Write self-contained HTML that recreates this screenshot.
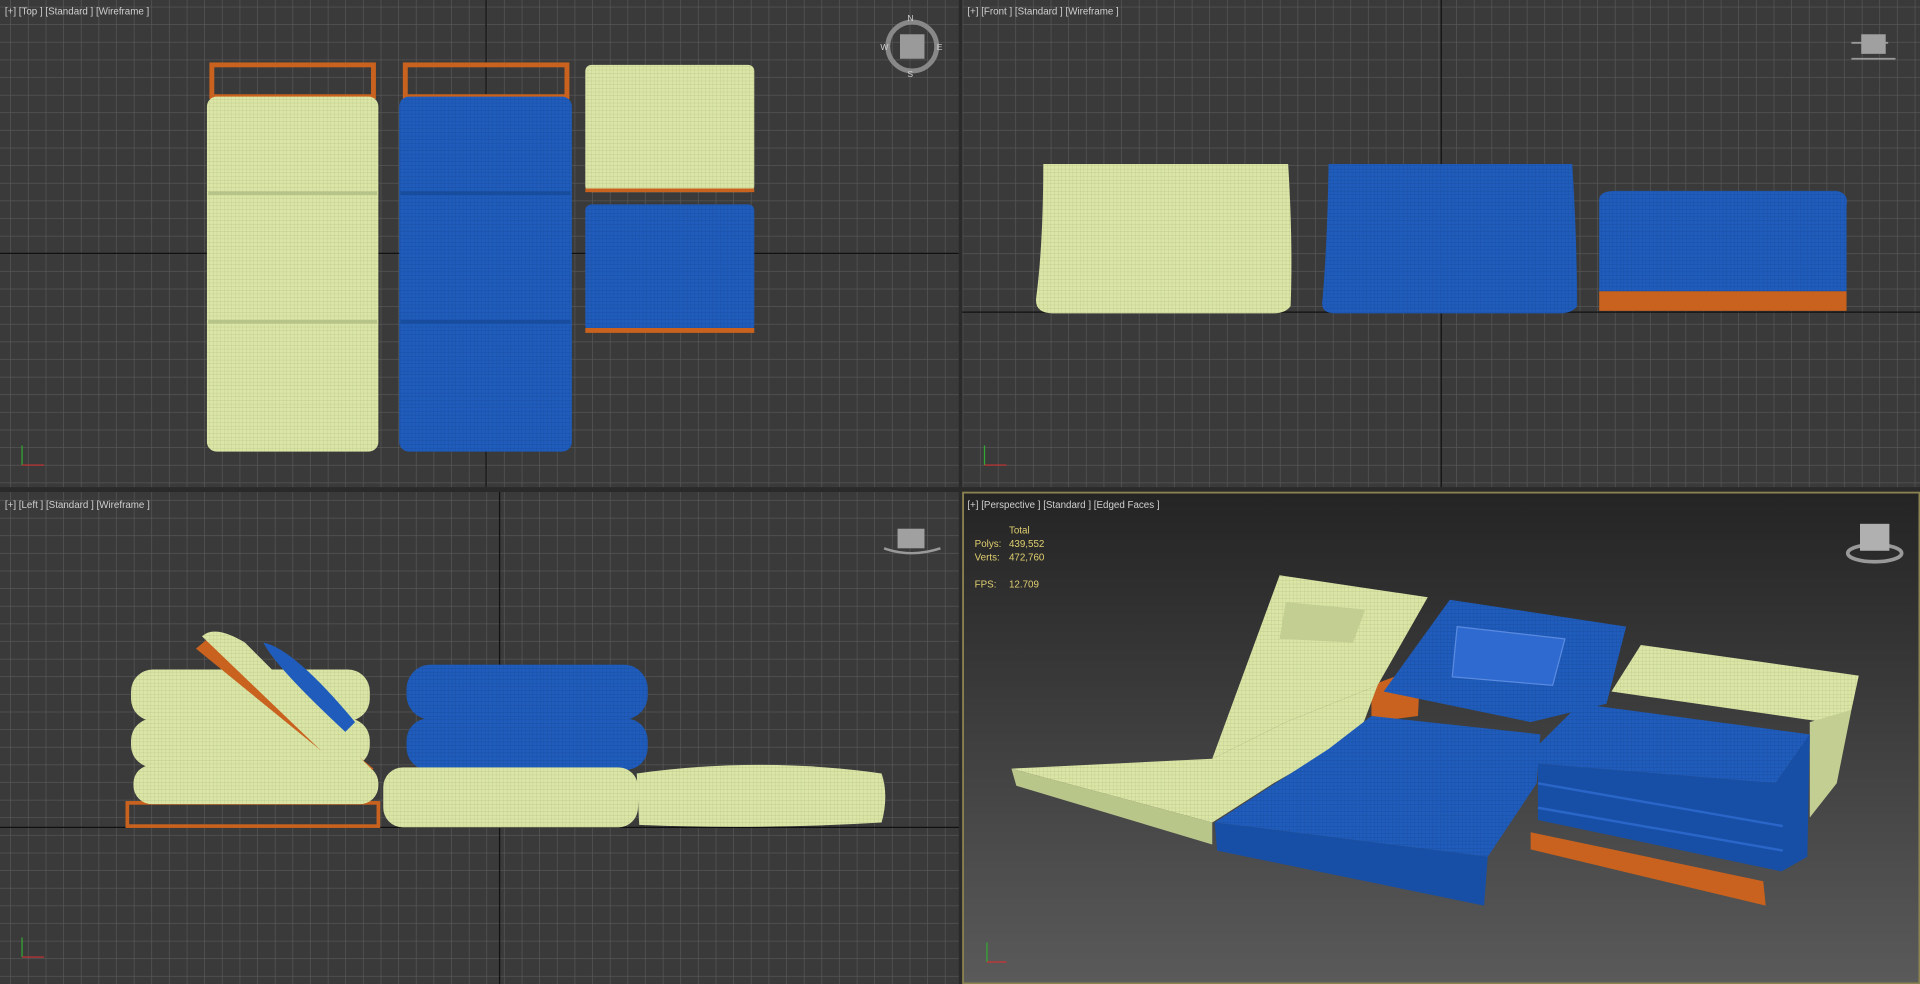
<!DOCTYPE html>
<html><head><meta charset="utf-8"><style>
html,body{margin:0;padding:0;background:#3a3a3a;overflow:hidden}
svg{display:block}
text{font-family:"Liberation Sans",sans-serif;font-size:8px;fill:#d0d0d0}
</style></head><body>
<svg width="1920" height="984" viewBox="0 0 1568 804" preserveAspectRatio="none">
<defs>
<pattern id="g1" x="9" y="6" width="14.4" height="14.4" patternUnits="userSpaceOnUse"><path d="M14.4 0V14.4M0 14.4H14.4" stroke="#5a5a5a" stroke-width="1" fill="none"/></pattern>
<pattern id="mc" width="3" height="3" patternUnits="userSpaceOnUse"><rect width="3" height="3" fill="#dbe6a6"/><path d="M0 0H3M0 0V3" stroke="#b7c489" stroke-width=".5"/></pattern>
<pattern id="mb" width="3" height="3" patternUnits="userSpaceOnUse"><rect width="3" height="3" fill="#1f5cbc"/><path d="M0 0H3M0 0V3" stroke="#184c9c" stroke-width=".5"/></pattern>
<linearGradient id="pg" x1="0" y1="0" x2="0" y2="1"><stop offset="0" stop-color="#242424"/><stop offset="1" stop-color="#5a5a5a"/></linearGradient>
</defs>
<rect width="1568" height="804" fill="#2a2a2a"/>
<rect x="0" y="0" width="783" height="398" fill="#3a3a3a"/><rect x="0" y="0" width="783" height="398" fill="url(#g1)"/>
<path d="M0 207H783M397 0V398" stroke="#111" stroke-width="1"/>
<rect x="786" y="0" width="782" height="398" fill="#3a3a3a"/><rect x="786" y="0" width="782" height="398" fill="url(#g1)"/>
<path d="M786 255H1568M1177 0V398" stroke="#111"/>
<rect x="0" y="402" width="783" height="402" fill="#3a3a3a"/><rect x="0" y="402" width="783" height="402" fill="url(#g1)"/>
<path d="M0 676H783M408 402V804" stroke="#111"/>
<rect x="786.5" y="402.5" width="781" height="401" fill="url(#pg)" stroke="#8a8250" stroke-width="1.5"/>

<text x="4" y="12">[+] [Top ] [Standard ] [Wireframe ]</text>
<text x="790" y="12">[+] [Front ] [Standard ] [Wireframe ]</text>
<text x="4" y="415">[+] [Left ] [Standard ] [Wireframe ]</text>
<text x="790" y="415">[+] [Perspective ] [Standard ] [Edged Faces ]</text>
<text x="824" y="436" style="fill:#e0d070">Total</text>
<text x="796" y="447" style="fill:#e0d070">Polys:</text><text x="824" y="447" style="fill:#e0d070">439,552</text>
<text x="796" y="458" style="fill:#e0d070">Verts:</text><text x="824" y="458" style="fill:#e0d070">472,760</text>
<text x="796" y="480" style="fill:#e0d070">FPS:</text><text x="824" y="480" style="fill:#e0d070">12.709</text>

<rect x="173" y="53" width="132" height="26" fill="none" stroke="#c8621e" stroke-width="4"/>
<rect x="331" y="53" width="132" height="26" fill="none" stroke="#c8621e" stroke-width="4"/>
<rect x="169" y="79" width="140" height="290" rx="8" fill="url(#mc)"/>
<path d="M170 158H308M170 263H308" stroke="#b7c489" stroke-width="3"/>
<rect x="326" y="79" width="141" height="290" rx="8" fill="url(#mb)"/>
<path d="M327 158H466M327 263H466" stroke="#184c9c" stroke-width="3"/>
<rect x="478" y="53" width="138" height="104" rx="5" fill="url(#mc)"/>
<rect x="478" y="154" width="138" height="3" fill="#c8621e"/>
<rect x="478" y="167" width="138" height="104" rx="5" fill="url(#mb)"/>
<rect x="478" y="268" width="138" height="4" fill="#c8621e"/>
<circle cx="745" cy="38" r="20" fill="none" stroke="#888" stroke-width="4"/>
<rect x="735" y="28" width="20" height="20" fill="#9a9a9a"/>
<text x="741" y="17" style="font-size:7px">N</text><text x="741" y="63" style="font-size:7px">S</text>
<text x="719" y="41" style="font-size:7px">W</text><text x="765" y="41" style="font-size:7px">E</text>
<path d="M1512 35H1542M1512 48H1548" stroke="#999" stroke-width="1.5"/><rect x="1520" y="28" width="20" height="16" fill="#a0a0a0"/>
<path d="M722 448q22 8 46 0" stroke="#999" stroke-width="2" fill="none"/><rect x="733" y="432" width="22" height="16" fill="#a0a0a0"/>
<ellipse cx="1531" cy="452" rx="22" ry="7" fill="none" stroke="#999" stroke-width="3"/><rect x="1519" y="428" width="24" height="22" fill="#b0b0b0"/>

<path d="M852 134H1052Q1056 200 1054 250Q1050 256 1040 256H860Q846 256 846 245Q852 200 852 134Z" fill="url(#mc)"/>
<path d="M1085 134H1284Q1288 200 1288 250Q1284 256 1274 256H1090Q1078 256 1080 245Q1084 200 1085 134Z" fill="url(#mb)"/>
<path d="M1306 163Q1306 156 1320 156H1500Q1510 158 1508 168V238H1306Z" fill="url(#mb)"/>
<rect x="1306" y="238" width="202" height="16" fill="#c8621e"/>

<rect x="104" y="656" width="205" height="19" fill="none" stroke="#c8621e" stroke-width="3"/>
<rect x="107" y="547" width="195" height="42" rx="18" fill="url(#mc)"/>
<rect x="107" y="587" width="195" height="40" rx="18" fill="url(#mc)"/>
<rect x="109" y="625" width="200" height="32" rx="15" fill="url(#mc)"/>
<path d="M160 530L295 640L305 628L172 520Z" fill="#c8621e"/>
<path d="M165 520Q175 510 200 525L305 630Q300 645 290 640Z" fill="url(#mc)"/>
<path d="M215 525Q240 530 290 590L282 598Q225 545 215 525Z" fill="#1f5cbc"/>
<rect x="332" y="543" width="197" height="45" rx="20" fill="url(#mb)"/>
<rect x="332" y="587" width="197" height="42" rx="18" fill="url(#mb)"/>
<rect x="313" y="627" width="208" height="49" rx="16" fill="url(#mc)"/>
<path d="M520 632Q620 618 720 632Q726 650 720 672Q620 678 522 674Z" fill="url(#mc)"/>

<!-- perspective -->
<path d="M1120 560L1160 545L1158 585L1120 590Z" fill="#c8621e"/>
<path d="M1045 470L1166 488L1125 560L1050 590L990 620Z" fill="url(#mc)"/>
<path d="M826 628L990 620L1050 590L1125 560L1110 600L1040 640L990 672Z" fill="url(#mc)"/>
<path d="M826 628L990 672L990 690L830 642Z" fill="#b9c68a"/>
<path d="M1050 492L1115 498L1105 525L1045 522Z" fill="#c3cf92"/>
<path d="M1130 565L1184 490L1328 512L1312 575L1250 590Z" fill="url(#mb)"/>
<path d="M1190 512L1278 522L1268 560L1186 553Z" fill="#2e6ad0" stroke="#5b8be0"/>
<path d="M992 672L1085 612L1120 585L1258 600L1255 640L1215 700Z" fill="url(#mb)"/>
<path d="M992 672L1215 700L1212 740L994 695Z" fill="#174fa6"/>
<path d="M1316 565L1340 527L1518 552L1512 580L1490 590Z" fill="url(#mc)"/>
<path d="M1478 590L1512 580L1500 640L1478 668Z" fill="#c3cf92"/>
<path d="M1255 610L1290 575L1478 600L1450 640L1256 624Z" fill="url(#mb)"/>
<path d="M1256 624L1450 640L1478 600L1476 700L1455 712L1256 670Z" fill="#174fa6"/>
<path d="M1256 640L1456 675M1256 660L1456 695" stroke="#2a66c8" stroke-width="2"/>
<path d="M1250 680L1440 720L1442 740L1250 694Z" fill="#c8621e"/>

<path d="M18 380V364" stroke="#3a3"/><path d="M18 380H36" stroke="#c33"/>
<path d="M804 380V364" stroke="#3a3"/><path d="M804 380H822" stroke="#c33"/>
<path d="M18 782V766" stroke="#3a3"/><path d="M18 782H36" stroke="#c33"/>
<path d="M806 786V770" stroke="#3a3"/><path d="M806 786H822" stroke="#c33"/>
</svg>
</body></html>
